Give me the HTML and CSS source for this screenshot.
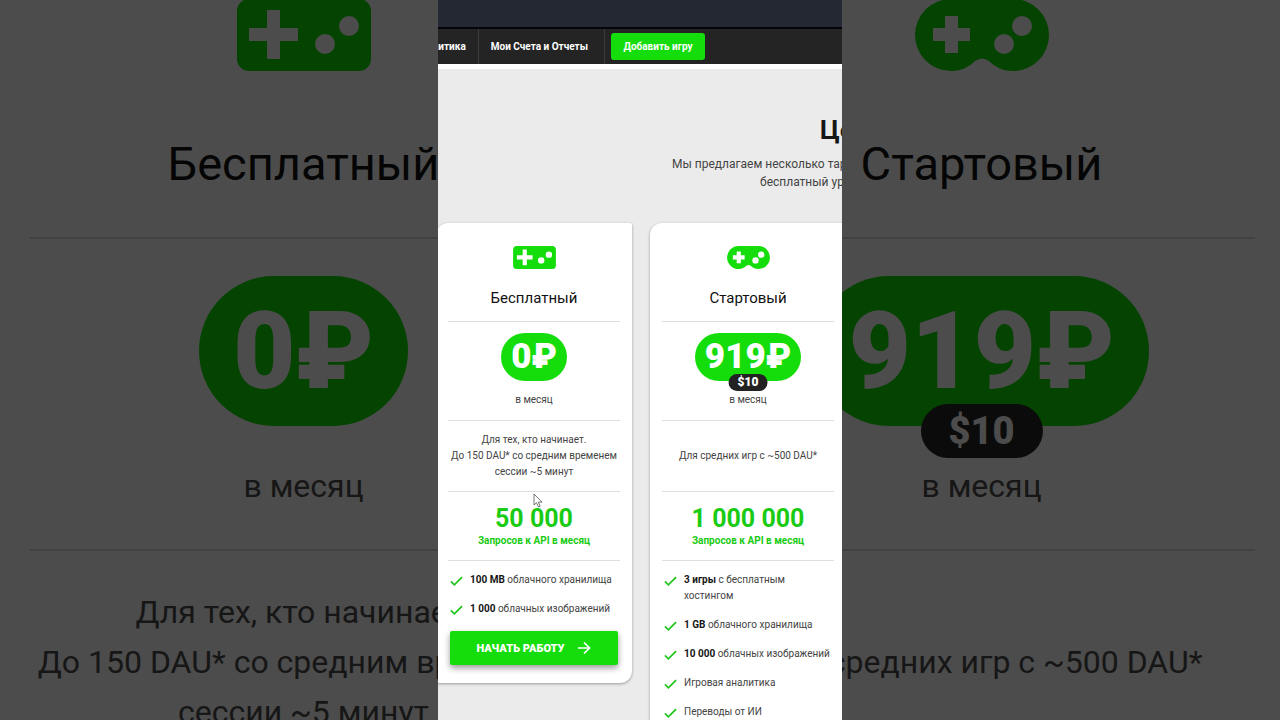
FILE: index.html
```
<!DOCTYPE html>
<html lang="ru">
<head>
    <meta charset="UTF-8">
    <meta name="viewport" content="width=device-width, initial-scale=1.0">
    <title>Цены</title>
    <link rel="stylesheet" href="styles.css">
</head>
<body>
    <!-- shared icons -->
    <svg class="sprite" aria-hidden="true">
        <symbol id="pad-square" viewBox="0 0 134 72">
            <path fill="currentColor" fill-rule="evenodd" d="M12 0H122A12 12 0 0 1 134 12V60A12 12 0 0 1 122 72H12A12 12 0 0 1 0 60V12A12 12 0 0 1 12 0ZM30 11V29H12V42H30V60H43V42H61V29H43V11ZM78 45a10 10 0 1 0 20 0a10 10 0 1 0-20 0ZM102 27a10 10 0 1 0 20 0a10 10 0 1 0-20 0Z"/>
        </symbol>
        <symbol id="pad-round" viewBox="0 0 134 72">
            <path fill="currentColor" fill-rule="evenodd" d="M36 0H98A36 36 0 0 1 98 72C87 72 79 67 74 62Q67 57 60 62C55 67 47 72 36 72A36 36 0 0 1 36 0ZM30 17V29H18V42H30V54H43V42H55V29H43V17ZM79 45a10 10 0 1 0 20 0a10 10 0 1 0-20 0ZM97 27a10 10 0 1 0 20 0a10 10 0 1 0-20 0Z"/>
        </symbol>
        <symbol id="check" viewBox="0 0 14 12">
            <path fill="none" stroke="currentColor" stroke-width="1.8" d="M1 6.5L4.700 10.200L13 1.800"/>
        </symbol>
    </svg>

    <div class="stage">
        <aside class="side side-left">
            <div class="big-plan">
                <svg class="big-icon"><use href="#pad-square"/></svg>
                <div class="big-title">Бесплатный</div>
                <div class="big-price">
                    <span class="big-pill">0₽</span>
                    <span class="big-period">в месяц</span>
                </div>
                <p class="big-about">Для тех, кто начинает.<br>До 150 DAU* со средним временем<br>сессии ~5 минут</p>
            </div>
        </aside>

        <main class="screen">
            <div class="topbar"></div>
            <nav class="menu">
                <a href="#">Аналитика</a>
                <a href="#" class="reports">Мои Счета и Отчеты</a>
                <button class="add-game">Добавить игру</button>
            </nav>

            <section class="pricing">
                <h1>Цены</h1>
                <p class="lead">Мы предлагаем несколько тарифов<br><span>бесплатный уровень</span></p>

                <div class="plans">
                    <article class="plan">
                        <header>
                            <svg class="pad"><use href="#pad-square"/></svg>
                            <h2>Бесплатный</h2>
                        </header>
                        <div class="price">
                            <span class="pill">0₽</span>
                            <span class="period">в месяц</span>
                        </div>
                        <p class="about">Для тех, кто начинает.<br>До 150 DAU* со средним временем<br>сессии ~5 минут</p>
                        <div class="requests">
                            <strong>50 000</strong>
                            <span>Запросов к API в месяц</span>
                        </div>
                        <ul class="features">
                            <li><svg><use href="#check"/></svg><span><b>100 MB</b> облачного хранилища</span></li>
                            <li><svg><use href="#check"/></svg><span><b>1 000</b> облачных изображений</span></li>
                        </ul>
                        <button class="start">
                            НАЧАТЬ РАБОТУ
                            <svg viewBox="0 0 14 14"><path fill="none" stroke="currentColor" stroke-width="1.7" d="M1 7H12M7 1.500L12.500 7L7 12.500"/></svg>
                        </button>
                    </article>

                    <article class="plan">
                        <header>
                            <svg class="pad"><use href="#pad-round"/></svg>
                            <h2>Стартовый</h2>
                        </header>
                        <div class="price">
                            <span class="pill">919₽<small class="usd">$10</small></span>
                            <span class="period">в месяц</span>
                        </div>
                        <p class="about">Для средних игр с ~500 DAU*</p>
                        <div class="requests">
                            <strong>1 000 000</strong>
                            <span>Запросов к API в месяц</span>
                        </div>
                        <ul class="features">
                            <li><svg><use href="#check"/></svg><span><b>3 игры</b> с бесплатным<br>хостингом</span></li>
                            <li><svg><use href="#check"/></svg><span><b>1 GB</b> облачного хранилища</span></li>
                            <li><svg><use href="#check"/></svg><span><b>10 000</b> облачных изображений</span></li>
                            <li><svg><use href="#check"/></svg><span>Игровая аналитика</span></li>
                            <li><svg><use href="#check"/></svg><span>Переводы от ИИ</span></li>
                        </ul>
                    </article>
                </div>
            </section>

            <svg class="cursor" viewBox="0 0 10 15"><path fill="#fff" stroke="#555" stroke-width="0.8" d="M1 1V12L3.500 9.700L5.500 14L7.200 13.200L5.300 9.100H9Z"/></svg>
        </main>

        <aside class="side side-right">
            <div class="big-plan">
                <svg class="big-icon"><use href="#pad-round"/></svg>
                <div class="big-title">Стартовый</div>
                <div class="big-price">
                    <span class="big-pill">919₽<small class="big-usd">$10</small></span>
                    <span class="big-period">в месяц</span>
                </div>
                <p class="big-about">Для средних игр с ~500 DAU*</p>
            </div>
        </aside>
    </div>
</body>
</html>
```
FILE: styles.css
```
* {
    box-sizing: border-box;
}
body {
    margin: 0;
    font-family: Roboto, "Liberation Sans", sans-serif;
    font-size: 10px;
    line-height: 16px;
    color: #444;
    background-color: #4c4c4c;
}
h1, h2, p, ul {
    margin: 0;
    padding: 0;
}
button {
    font-family: inherit;
    border: none;
    color: #fff;
    background-color: #15dd0b;
    cursor: pointer;
}
.sprite {
    display: none;
}
.stage {
    display: grid;
    grid-template-columns: 1fr 404px 1fr;
    height: 100vh;
    overflow: hidden;
}

/* enlarged dark plans on both sides */
.side {
    display: flex;
    min-width: 0;
    overflow: hidden;
    background-color: #4c4c4c;
    color: #161616;
}
.side-left {
    padding-left: 30px;
}
.side-right {
    justify-content: flex-end;
    padding-right: 25px;
}
.big-plan {
    flex-shrink: 0;
    width: 547px;
    text-align: center;
}
.big-icon {
    display: block;
    width: 134px;
    height: 72px;
    margin: -1px auto 0;
    color: #044400;
}
.big-title {
    padding: 62px 0 42px;
    font-size: 47px;
    line-height: 62px;
    color: #050505;
    border-bottom: 2px solid #424242;
}
.big-price {
    display: flex;
    flex-direction: column;
    align-items: center;
    padding: 37px 0 38px;
    border-bottom: 2px solid #424242;
}
.big-pill {
    position: relative;
    padding: 0 34px;
    border-radius: 75px;
    font-size: 108px;
    font-weight: 900;
    line-height: 150px;
    color: #4c4c4c;
    background-color: #044400;
}
.big-usd {
    position: absolute;
    left: 50%;
    bottom: -32px;
    transform: translateX(-50%);
    padding: 0 28px;
    border-radius: 27px;
    font-size: 38px;
    line-height: 54px;
    background-color: #0b0b0b;
}
.big-period {
    margin-top: 35px;
    font-size: 32px;
    line-height: 50px;
}
.big-about {
    display: grid;
    align-content: center;
    justify-content: center;
    height: 222px;
    font-size: 32px;
    line-height: 50px;
    white-space: nowrap;
}

/* page in the middle */
.screen {
    position: relative;
    min-width: 0;
    overflow: hidden;
    background-color: #ebebeb;
}
.topbar {
    height: 29px;
    background-color: #232832;
    border-bottom: 2px solid #04040c;
}
.menu {
    display: flex;
    justify-content: flex-end;
    align-items: center;
    height: 40px;
    padding-right: 137px;
    background-color: #242424;
    border-bottom: 5px solid #fff;
}
.menu a {
    flex-shrink: 0;
    padding: 0 12px;
    font-weight: 700;
    line-height: 35px;
    color: #fff;
    text-decoration: none;
    border-right: 1px solid #3b3b3b;
}
.menu .reports {
    padding-right: 16px;
}
.add-game {
    flex-shrink: 0;
    width: 94px;
    height: 27px;
    margin-left: 6px;
    padding: 0;
    border-radius: 3px;
    font-size: 10px;
    font-weight: 700;
}
.pricing {
    white-space: nowrap;
}
h1 {
    padding: 43px 0 0 382px;
    font-size: 26px;
    line-height: 36px;
    color: #161616;
}
.lead {
    padding: 7px 0 0 234px;
    font-size: 12px;
    line-height: 18px;
}
.lead span {
    padding-left: 88px;
}
.plans {
    display: flex;
    align-items: flex-start;
    gap: 18px;
    margin: 32px 0 0 -2px;
}
.plan {
    flex-shrink: 0;
    width: 196px;
    padding: 23px 12px 18px;
    border-radius: 12px 2px 12px 2px;
    background-color: #fff;
    box-shadow: 0 1px 3px rgba(0, 0, 0, 0.35);
    text-align: center;
}
.plan header {
    height: 76px;
    border-bottom: 1px solid #dedede;
}
.pad {
    display: block;
    width: 43px;
    height: 23px;
    margin: 0 auto;
    color: #15dd0b;
}
h2 {
    margin-top: 17px;
    font-size: 15px;
    font-weight: 400;
    line-height: 24px;
    color: #111;
}
.price {
    display: flex;
    flex-direction: column;
    align-items: center;
    padding: 11px 0 12px;
    border-bottom: 1px solid #dedede;
}
.pill {
    position: relative;
    padding: 0 10px;
    border-radius: 24px;
    font-size: 35px;
    font-weight: 900;
    line-height: 48px;
    color: #fff;
    background-color: #15dd0b;
}
.usd {
    position: absolute;
    left: 50%;
    bottom: -10px;
    transform: translateX(-50%);
    padding: 0 9px;
    border-radius: 9px;
    font-size: 12px;
    line-height: 17px;
    background-color: #222;
}
.period {
    margin-top: 11px;
}
.about {
    display: grid;
    align-content: center;
    justify-content: center;
    height: 71px;
    border-bottom: 1px solid #dedede;
}
.requests {
    padding: 13px 0 11px;
    color: #1acb14;
    border-bottom: 1px solid #dedede;
}
.requests strong {
    display: block;
    font-size: 25px;
    line-height: 28px;
}
.requests span {
    display: block;
    font-weight: 700;
}
.features {
    display: flex;
    flex-direction: column;
    gap: 13px;
    padding: 11px 0 0 2px;
    list-style: none;
    text-align: left;
}
.features li {
    display: flex;
    gap: 7px;
}
.features svg {
    flex-shrink: 0;
    width: 13px;
    height: 12px;
    margin-top: 3px;
    color: #1fc41a;
}
.features b {
    color: #161616;
}
.start {
    display: flex;
    justify-content: center;
    align-items: center;
    gap: 13px;
    width: 168px;
    height: 34px;
    margin: 14px 2px 0;
    border-radius: 2px;
    font-size: 11px;
    font-weight: 900;
    box-shadow: 0 3px 6px rgba(0, 0, 0, 0.4);
}
.start svg {
    width: 14px;
    height: 14px;
}
.cursor {
    position: absolute;
    left: 95px;
    top: 493px;
    width: 10px;
    height: 15px;
}
```
